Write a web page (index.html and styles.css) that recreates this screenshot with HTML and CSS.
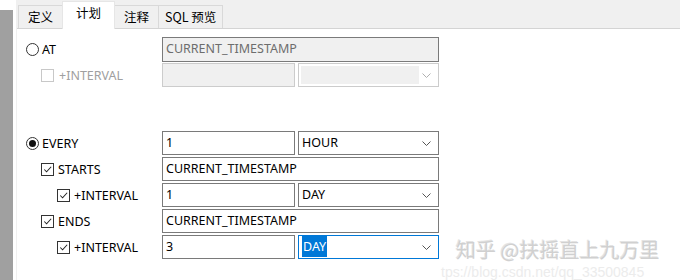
FILE: index.html
```html
<!DOCTYPE html>
<html lang="zh-CN">
<head>
    <meta charset="UTF-8">
    <title>计划</title>
    <link rel="stylesheet" href="styles.css">
</head>
<body>
    <div class="window">
        <div class="side"></div>
        <div class="main">
            <div class="tabs">
                <div class="tab">定义</div>
                <div class="tab active">计划</div>
                <div class="tab">注释</div>
                <div class="tab sql">SQL 预览</div>
            </div>
            <div class="form">
                <div class="row">
                    <div class="label lv0"><span class="radio"></span>AT</div>
                    <div class="field wide readonly">CURRENT_TIMESTAMP</div>
                </div>
                <div class="row">
                    <div class="label lv1 disabled"><span class="check off"></span>+INTERVAL</div>
                    <div class="field short off"></div>
                    <div class="field select off"><span class="inner"></span><svg class="arrow" viewBox="0 0 9 5"><path d="M0.5 0.5 L4.5 4.5 L8.5 0.5" fill="none" stroke="#b0b0b0"/></svg></div>
                </div>

                <div class="row gap">
                    <div class="label lv0"><span class="radio on"></span>EVERY</div>
                    <div class="field short">1</div>
                    <div class="field select">HOUR<svg class="arrow" viewBox="0 0 9 5"><path d="M0.5 0.5 L4.5 4.5 L8.5 0.5" fill="none" stroke="#555"/></svg></div>
                </div>
                <div class="row">
                    <div class="label lv1"><span class="check"><svg viewBox="0 0 12 12"><path d="M2.5 6 L5 8.5 L10 3" fill="none" stroke="#222" stroke-width="1.1"/></svg></span>STARTS</div>
                    <div class="field wide">CURRENT_TIMESTAMP</div>
                </div>
                <div class="row">
                    <div class="label lv2"><span class="check"><svg viewBox="0 0 12 12"><path d="M2.5 6 L5 8.5 L10 3" fill="none" stroke="#222" stroke-width="1.1"/></svg></span>+INTERVAL</div>
                    <div class="field short">1</div>
                    <div class="field select">DAY<svg class="arrow" viewBox="0 0 9 5"><path d="M0.5 0.5 L4.5 4.5 L8.5 0.5" fill="none" stroke="#555"/></svg></div>
                </div>
                <div class="row">
                    <div class="label lv1"><span class="check"><svg viewBox="0 0 12 12"><path d="M2.5 6 L5 8.5 L10 3" fill="none" stroke="#222" stroke-width="1.1"/></svg></span>ENDS</div>
                    <div class="field wide">CURRENT_TIMESTAMP</div>
                </div>
                <div class="row">
                    <div class="label lv2"><span class="check"><svg viewBox="0 0 12 12"><path d="M2.5 6 L5 8.5 L10 3" fill="none" stroke="#222" stroke-width="1.1"/></svg></span>+INTERVAL</div>
                    <div class="field short">3</div>
                    <div class="field select focus"><span class="hl">DAY</span><svg class="arrow" viewBox="0 0 9 5"><path d="M0.5 0.5 L4.5 4.5 L8.5 0.5" fill="none" stroke="#555"/></svg></div>
                </div>
            </div>
            <div class="mark">
                <div class="zhihu">知乎 @扶摇直上九万里</div>
                <div class="url">tps://blog.csdn.net/qq_33500845</div>
            </div>
        </div>
    </div>
</body>
</html>
```

FILE: styles.css
```css
body {
    margin: 0;
    font-family: 'Noto Sans', 'Noto Sans CJK SC', sans-serif;
    font-size: 12px;
    color: #000;
    background-color: #fff;
}
.window {
    display: flex;
    height: 280px;
    overflow: hidden;
}
.side {
    width: 13px;
    margin-top: 10px;
    background-color: #a0a0a0;
    flex-shrink: 0;
}
.main {
    position: relative;
    flex: 1;
    margin-left: 3px;
    border-left: 1px solid #f0f0f0;
}
.tabs {
    display: flex;
    align-items: flex-end;
    height: 28px;
    padding-left: 1px;
    background-color: #f0f0f0;
    border-bottom: 1px solid #d4d4d4;
}
.tab {
    height: 22px;
    line-height: 21px;
    padding: 0 9px;
    background-color: #f0f0f0;
    border: 1px solid #d9d9d9;
    border-bottom: none;
    margin-left: -1px;
    font-family: 'Noto Sans CJK SC', sans-serif;
    font-size: 12.5px;
}
.tab:first-child {
    margin-left: 0;
}
.tab.sql {
    padding: 0 6px;
}
.tab.active {
    position: relative;
    height: 27px;
    line-height: 22px;
    padding: 0 13px;
    background-color: #fff;
    margin-bottom: -1px;
    border-color: #e6e6e6;
}
.form {
    padding-top: 8px;
}
.row {
    display: flex;
    align-items: center;
    height: 24px;
    margin-bottom: 2px;
}
.row.gap {
    margin-top: 44px;
}
.label {
    display: flex;
    align-items: center;
    width: 145px;
    box-sizing: border-box;
    font-size: 12.5px;
}
.label.lv0 { padding-left: 9px; }
.label.lv1 { padding-left: 24px; }
.label.lv2 { padding-left: 40px; }
.label.disabled { color: #a0a0a0; }
.radio {
    width: 11px;
    height: 11px;
    border: 1px solid #333;
    border-radius: 50%;
    margin-right: 3px;
    display: flex;
    align-items: center;
    justify-content: center;
}
.radio.on::after {
    content: "";
    width: 7px;
    height: 7px;
    border-radius: 50%;
    background-color: #111;
}
.check {
    width: 11px;
    height: 11px;
    border: 1px solid #333;
    margin-right: 4px;
    background-color: #fff;
}
.check svg {
    display: block;
    width: 11px;
    height: 11px;
}
.check.off {
    border-color: #c8c8c8;
    margin-right: 5px;
}
.field {
    position: relative;
    height: 24px;
    line-height: 22px;
    box-sizing: border-box;
    border: 1px solid #7a7a7a;
    padding-left: 3px;
    background-color: #fff;
    font-size: 12.5px;
    white-space: nowrap;
}
.field.wide { width: 277px; }
.field.short { width: 133px; margin-right: 3px; }
.field.select { width: 141px; }
.field.readonly {
    height: 25px;
    background-color: #f0f0f0;
    color: #6d6d6d;
}
.field.off {
    border-color: #cccccc;
    background-color: #f0f0f0;
}
.field.select.off {
    background-color: #fff;
}
.field.select.off .inner {
    position: absolute;
    left: 2px;
    top: 2px;
    width: 118px;
    height: 18px;
    background-color: #f0f0f0;
}
.field.focus {
    border-color: #0078d7;
}
.hl {
    background-color: #0078d7;
    color: #fff;
    padding: 2px 1px;
}
.arrow {
    position: absolute;
    right: 7px;
    top: 9px;
    width: 9px;
    height: 5px;
}
.mark {
    position: absolute;
    left: 424px;
    top: 236px;
    width: 260px;
    height: 44px;
}
.zhihu {
    position: absolute;
    left: 15px;
    top: 4px;
    line-height: 20px;
    font-family: 'Noto Sans CJK SC', sans-serif;
    font-size: 20px;
    color: #d0d0d0;
    text-shadow: 1px 1px 0 #fff, -1px -1px 0 #e4e4e4;
    white-space: nowrap;
}
.url {
    position: absolute;
    left: 0;
    top: 29px;
    line-height: 14px;
    font-family: 'Liberation Sans', sans-serif;
    font-size: 14px;
    color: #ececec;
    white-space: nowrap;
}
```
